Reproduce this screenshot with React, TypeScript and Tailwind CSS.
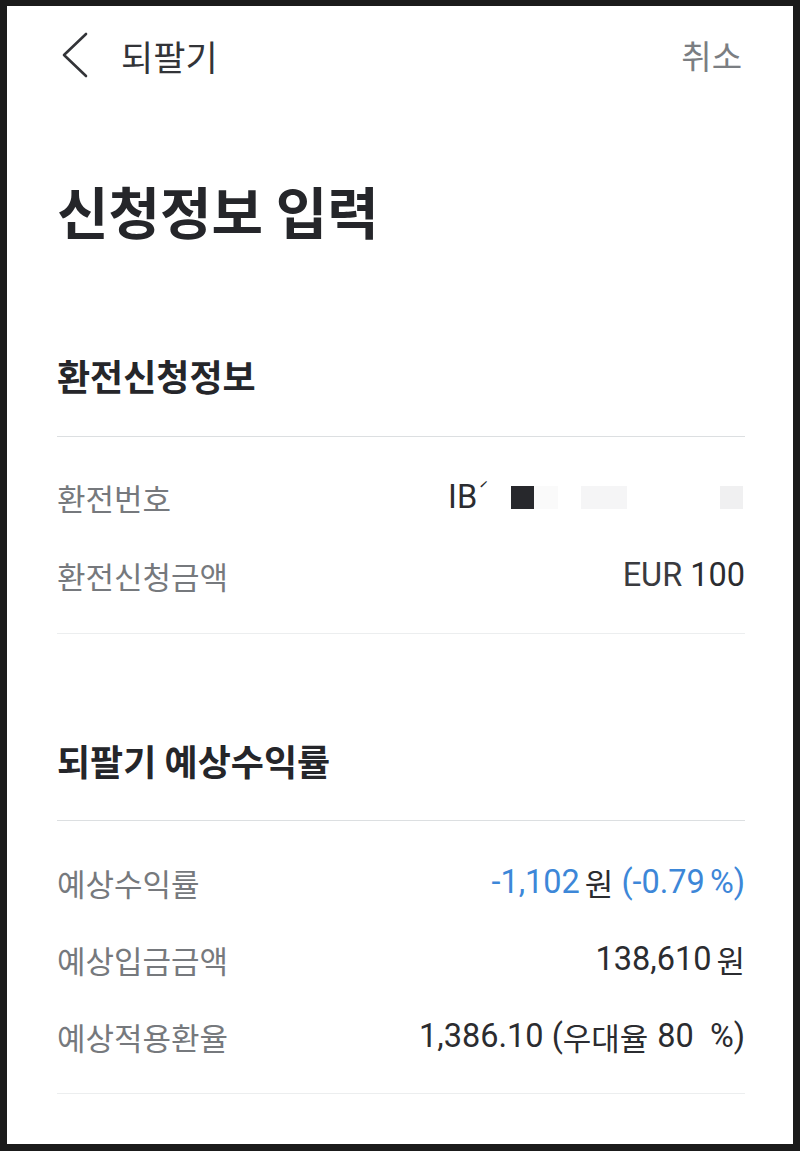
import React from 'react'

const font = { fontFamily: '"Noto Sans CJK KR", "Noto Sans", sans-serif' }
const numFont = { fontFamily: 'Roboto, "Noto Sans CJK KR", sans-serif' }

function Row({ label, tall, children }: { label: string; tall?: boolean; children: React.ReactNode }) {
  return (
    <div className={tall ? 'flex h-[78px] items-center justify-between' : 'flex h-[77px] items-center justify-between'}>
      <span className="text-[31px] leading-none text-[#76797d]">{label}</span>
      <div className="flex items-center text-[32.5px] leading-none text-[#2b2c30]" style={numFont}>
        {children}
      </div>
    </div>
  )
}

export default function App() {
  return (
    <div className="bg-[#1b1b1b] px-[7px] pb-[7px] pt-[6px]" style={font}>
      <div className="flex h-[1138px] flex-col bg-white pl-[50px] pr-[48px]">
        {/* header */}
        <div className="flex h-[98px] items-center justify-between">
          <div className="flex items-center">
            <svg width="26" height="46" viewBox="0 0 26 46" className="ml-[5px]">
              <polyline
                points="24,2 2,23 24,44"
                fill="none"
                stroke="#333438"
                strokeWidth="2.6"
                strokeLinecap="round"
                strokeLinejoin="round"
              />
            </svg>
            <span className="ml-[33px] text-[35px] leading-none text-[#333438]">되팔기</span>
          </div>
          <span className="mr-[3px] text-[33px] leading-none text-[#7b7e82]">취소</span>
        </div>

        <h1 className="mt-[74px] text-[56px] font-bold leading-[64px] text-[#25262a]">신청정보 입력</h1>

        {/* 환전신청정보 */}
        <h2 className="mt-[111px] text-[36px] font-bold leading-[44px] text-[#25262a]">환전신청정보</h2>
        <div className="mt-[39px] h-px bg-[#dcdfe1]" />
        <div className="pb-[19px] pt-[21px]">
          <Row label="환전번호" tall>
            <span className="text-[#2b2c30]">IB</span>
            <span className="mb-[12px] ml-[1px] text-[18px]">ˊ</span>
            <span className="ml-[22px] h-[23px] w-[23px] bg-[#27282c]" />
            <span className="h-[23px] w-[24px] bg-[#fafafa]" />
            <span className="ml-[23px] h-[23px] w-[46px] bg-[#f5f5f6]" />
            <span className="ml-[93px] h-[23px] w-[23px] bg-[#f0f0f1]" />
            <span className="w-[2px]" />
          </Row>
          <Row label="환전신청금액" tall>
            <span className="text-[#3a3b3f]">EUR</span>
            <span className="ml-[8px]">100</span>
          </Row>
        </div>
        <div className="h-px bg-[#eceeef]" />

        {/* 되팔기 예상수익률 */}
        <h2 className="mt-[104px] text-[36px] font-bold leading-[44px] text-[#25262a]">되팔기 예상수익률</h2>
        <div className="mt-[38px] h-px bg-[#dcdfe1]" />
        <div className="pb-[18px] pt-[23px]">
          <Row label="예상수익률">
            <span className="text-[#3d87d8]">-1,102</span>
            <span className="ml-[5px] text-[31px]" style={font}>원</span>
            <span className="ml-[8px] text-[#3d87d8]">(-0.79</span>
            <span className="ml-[5px] text-[#3d87d8]">%)</span>
          </Row>
          <Row label="예상입금금액">
            <span>138,610</span>
            <span className="ml-[5px] text-[31px]" style={font}>원</span>
          </Row>
          <Row label="예상적용환율">
            <span>1,386.10 (</span>
            <span className="text-[31px]" style={font}>우대율</span>
            <span className="ml-[9px]">80</span>
            <span className="ml-[16px]">%)</span>
          </Row>
        </div>
        <div className="h-px bg-[#eceeef]" />
      </div>
    </div>
  )
}
